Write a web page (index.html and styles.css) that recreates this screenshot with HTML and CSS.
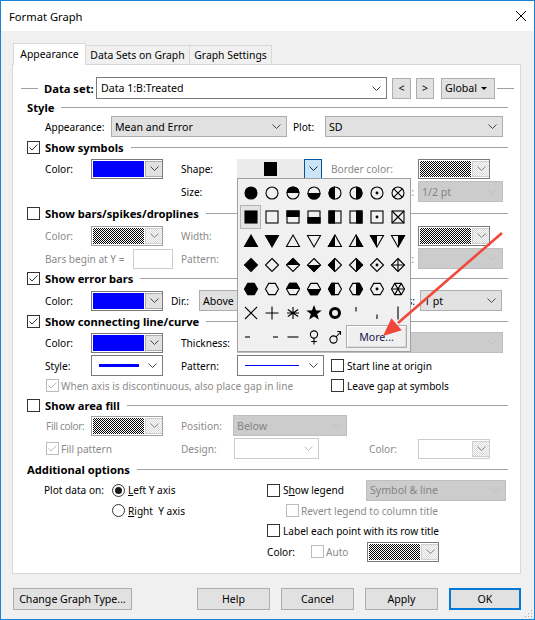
FILE: index.html
```html
<!DOCTYPE html>
<html lang="en">
<head>
    <meta charset="UTF-8">
    <title>Format Graph</title>
    <link rel="stylesheet" href="styles.css">
</head>
<body>
<div class="window">
    <!-- Title bar -->
    <div class="titlebar">
        <span class="title">Format Graph</span>
        <svg class="close" viewBox="0 0 10 10"><path d="M0 0L10 10M10 0L0 10"/></svg>
    </div>

    <div class="dialog">
        <div class="tabs">
            <div class="tab tab-app active">Appearance</div>
            <div class="tab tab-ds">Data Sets on Graph</div>
            <div class="tab tab-gs">Graph Settings</div>
        </div>

        <div class="panel">
            <!-- Data set picker -->
            <div class="dsrow">
                <span class="dsline first"></span>
                <span class="dslabel">Data set:</span>
                <div class="combo ds">Data 1:B:Treated<svg class="chev" viewBox="0 0 9 5"><path d="M.5.5l4 4 4-4"/></svg></div>
                <div class="btn prev">&lt;</div>
                <div class="btn next">&gt;</div>
                <div class="btn global">Global<span class="caret"></span></div>
                <span class="dsline last"></span>
            </div>

            <!-- Style -->
            <div class="sect mt1">Style</div>
            <div class="row mt2">
                <span class="lbl w66">Appearance:</span>
                <div class="sel w176">Mean and Error<svg class="chev" viewBox="0 0 9 5"><path d="M.5.5l4 4 4-4"/></svg></div>
                <span class="lbl plot">Plot:</span>
                <div class="sel w178">SD<svg class="chev" viewBox="0 0 9 5"><path d="M.5.5l4 4 4-4"/></svg></div>
            </div>

            <!-- Symbols -->
            <div class="sect mt3"><span class="cb"><svg viewBox="0 0 11 11"><path d="M1.5 5.5L4 8l5.5-5.5"/></svg></span>Show symbols</div>
            <div class="row mt4">
                <span class="lbl c1">Color:</span>
                <div class="swatchbox"><span class="fill blue"></span><span class="drop"><svg class="chev" viewBox="0 0 9 5"><path d="M.5.5l4 4 4-4"/></svg></span></div>
                <span class="lbl c3">Shape:</span>
                <div class="shapebox"><span class="val"><span class="blk"></span></span><span class="drop"><svg class="chev" viewBox="0 0 9 5"><path d="M.5.5l4 4 4-4"/></svg></span></div>
                <span class="lbl c5 dim">Border color:</span>
                <div class="swatchbox w85"><span class="fill pat"></span><span class="drop light"><svg class="chev" viewBox="0 0 9 5"><path d="M.5.5l4 4 4-4"/></svg></span></div>
            </div>
            <div class="row mt2">
                <span class="skip"></span>
                <span class="lbl c3">Size:</span>
                <div class="sel w85">Medium<svg class="chev" viewBox="0 0 9 5"><path d="M.5.5l4 4 4-4"/></svg></div>
                <span class="lbl c5 right dim">Border thickness:</span>
                <div class="sel off w85">1/2 pt<svg class="chev" viewBox="0 0 9 5"><path d="M.5.5l4 4 4-4"/></svg></div>
            </div>

            <!-- Bars -->
            <div class="sect mt4"><span class="cb"></span>Show bars/spikes/droplines</div>
            <div class="row mt5">
                <span class="lbl c1 dim">Color:</span>
                <div class="swatchbox off"><span class="fill pat"></span><span class="drop light"><svg class="chev" viewBox="0 0 9 5"><path d="M.5.5l4 4 4-4"/></svg></span></div>
                <span class="lbl c3 dim">Width:</span>
                <div class="sel off w85">Auto<svg class="chev" viewBox="0 0 9 5"><path d="M.5.5l4 4 4-4"/></svg></div>
                <span class="lbl c5 dim">Border color:</span>
                <div class="swatchbox w85"><span class="fill pat"></span><span class="drop light"><svg class="chev" viewBox="0 0 9 5"><path d="M.5.5l4 4 4-4"/></svg></span></div>
            </div>
            <div class="row mt2">
                <span class="lbl w88 dim">Bars begin at Y =</span>
                <span class="input"></span>
                <span class="lbl c3 short dim">Pattern:</span>
                <div class="sel off w85"><svg class="chev" viewBox="0 0 9 5"><path d="M.5.5l4 4 4-4"/></svg></div>
                <span class="lbl c5 right dim">Border:</span>
                <div class="sel off w85"><svg class="chev" viewBox="0 0 9 5"><path d="M.5.5l4 4 4-4"/></svg></div>
            </div>

            <!-- Error bars -->
            <div class="sect mt2"><span class="cb"><svg viewBox="0 0 11 11"><path d="M1.5 5.5L4 8l5.5-5.5"/></svg></span>Show error bars</div>
            <div class="row mt5">
                <span class="lbl c1">Color:</span>
                <div class="swatchbox"><span class="fill blue"></span><span class="drop"><svg class="chev" viewBox="0 0 9 5"><path d="M.5.5l4 4 4-4"/></svg></span></div>
                <span class="lbl dir">Dir.:</span>
                <div class="sel w100">Above<svg class="chev" viewBox="0 0 9 5"><path d="M.5.5l4 4 4-4"/></svg></div>
                <span class="lbl w119 right">Thickness:</span>
                <div class="sel w82">1 pt<svg class="chev" viewBox="0 0 9 5"><path d="M.5.5l4 4 4-4"/></svg></div>
            </div>

            <!-- Connecting line -->
            <div class="sect mt3"><span class="cb"><svg viewBox="0 0 11 11"><path d="M1.5 5.5L4 8l5.5-5.5"/></svg></span>Show connecting line/curve</div>
            <div class="row mt4">
                <span class="lbl c1">Color:</span>
                <div class="swatchbox"><span class="fill blue"></span><span class="drop"><svg class="chev" viewBox="0 0 9 5"><path d="M.5.5l4 4 4-4"/></svg></span></div>
                <span class="lbl c3">Thickness:</span>
                <div class="sel off w266">1 pt<svg class="chev" viewBox="0 0 9 5"><path d="M.5.5l4 4 4-4"/></svg></div>
            </div>
            <div class="row mt2">
                <span class="lbl c1">Style:</span>
                <div class="linebox w72"><span class="ln"></span><svg class="chev" viewBox="0 0 9 5"><path d="M.5.5l4 4 4-4"/></svg></div>
                <span class="lbl c3">Pattern:</span>
                <div class="linebox thin w87"><span class="ln"></span><svg class="chev" viewBox="0 0 9 5"><path d="M.5.5l4 4 4-4"/></svg></div>
                <span class="cb side"></span>
                <span class="lbl cbtext">Start line at origin</span>
            </div>
            <div class="row short mt2">
                <span class="pair w286"><span class="cb off"><svg viewBox="0 0 11 11"><path d="M1.5 5.5L4 8l5.5-5.5"/></svg></span><span class="lbl dim">When axis is discontinuous, also place gap in line</span></span>
                <span class="cb"></span>
                <span class="lbl cbtext">Leave gap at symbols</span>
            </div>

            <!-- Area fill -->
            <div class="sect mt5"><span class="cb"></span>Show area fill</div>
            <div class="row mt3">
                <span class="lbl c1 dim nudge">Fill color:</span>
                <div class="swatchbox off"><span class="fill pat"></span><span class="drop light"><svg class="chev" viewBox="0 0 9 5"><path d="M.5.5l4 4 4-4"/></svg></span></div>
                <span class="lbl c3 narrow dim">Position:</span>
                <div class="sel off w114">Below<svg class="chev" viewBox="0 0 9 5"><path d="M.5.5l4 4 4-4"/></svg></div>
            </div>
            <div class="row mt2">
                <span class="pair w136"><span class="cb off"><svg viewBox="0 0 11 11"><path d="M1.5 5.5L4 8l5.5-5.5"/></svg></span><span class="lbl dim">Fill pattern</span></span>
                <span class="lbl w53 dim">Design:</span>
                <div class="sel blank w85"><svg class="chev" viewBox="0 0 9 5"><path d="M.5.5l4 4 4-4"/></svg></div>
                <span class="lbl fillcolor dim">Color:</span>
                <div class="swatchbox blank w85"><span class="fill"></span><span class="drop light"><svg class="chev" viewBox="0 0 9 5"><path d="M.5.5l4 4 4-4"/></svg></span></div>
            </div>

            <!-- Additional options -->
            <div class="sect mt3">Additional options</div>
            <div class="opts">
                <span class="lbl plotlbl">Plot data on:</span>
                <div class="opt"><span class="rb on"></span><span class="lbl cbtext"><u>L</u>eft Y axis</span></div>
                <div class="opt">
                    <span class="cb"></span>
                    <span class="lbl cbtext legendtxt">S<u>h</u>ow legend</span>
                    <div class="sel off w140">Symbol &amp; line<svg class="chev" viewBox="0 0 9 5"><path d="M.5.5l4 4 4-4"/></svg></div>
                </div>
                <span></span>
                <div class="opt"><span class="rb"></span><span class="lbl cbtext"><u>R</u>ight&nbsp; Y axis</span></div>
                <div class="opt revert"><span class="cb off"></span><span class="lbl dim">Revert legend to column title</span></div>
                <div class="opt col3"><span class="cb"></span><span class="lbl cbtext">Label each point with its row title</span></div>
                <div class="opt col3">
                    <span class="lbl w44">Color:</span>
                    <span class="cb off"></span>
                    <span class="lbl dim auto">Auto</span>
                    <div class="swatchbox"><span class="fill pat"></span><span class="drop light"><svg class="chev" viewBox="0 0 9 5"><path d="M.5.5l4 4 4-4"/></svg></span></div>
                </div>
            </div>
        </div>

        <div class="buttons">
            <div class="btn change">Change Graph Type...</div>
            <div class="btn">Help</div>
            <div class="btn">Cancel</div>
            <div class="btn">Apply</div>
            <div class="btn ok">OK</div>
        </div>
    </div>

    <!-- Shapes used by the symbol picker -->
    <svg class="defs" aria-hidden="true">
        <defs>
            <clipPath id="ct"><rect x="-8" y="-8" width="16" height="8"/></clipPath>
            <clipPath id="cbt"><rect x="-8" y="0" width="16" height="8"/></clipPath>
            <clipPath id="cl"><rect x="-8" y="-8" width="8" height="16"/></clipPath>
            <clipPath id="cr"><rect x="0" y="-8" width="8" height="16"/></clipPath>
            <circle id="sc" r="6"/>
            <rect id="ss" x="-6" y="-6" width="12" height="12"/>
            <polygon id="stu" points="0,-6 6.5,5.5 -6.5,5.5"/>
            <polygon id="std" points="-6.5,-5.5 6.5,-5.5 0,6"/>
            <polygon id="sd" points="0,-6.5 6.5,0 0,6.5 -6.5,0"/>
            <polygon id="sh" points="-6.5,0 -3.3,-5.6 3.3,-5.6 6.5,0 3.3,5.6 -3.3,5.6"/>
        </defs>
    </svg>

    <!-- Shape dropdown (open) -->
    <div class="picker">
        <span class="cell"><svg viewBox="-7 -7 14 14"><use href="#sc" class="f"/></svg></span>
        <span class="cell"><svg viewBox="-7 -7 14 14"><use href="#sc"/></svg></span>
        <span class="cell"><svg viewBox="-7 -7 14 14"><use href="#sc"/><use href="#sc" class="f" clip-path="url(#ct)"/></svg></span>
        <span class="cell"><svg viewBox="-7 -7 14 14"><use href="#sc"/><use href="#sc" class="f" clip-path="url(#cbt)"/></svg></span>
        <span class="cell"><svg viewBox="-7 -7 14 14"><use href="#sc"/><use href="#sc" class="f" clip-path="url(#cl)"/></svg></span>
        <span class="cell"><svg viewBox="-7 -7 14 14"><use href="#sc"/><use href="#sc" class="f" clip-path="url(#cr)"/></svg></span>
        <span class="cell"><svg viewBox="-7 -7 14 14"><use href="#sc"/><circle r="0.9" class="f"/></svg></span>
        <span class="cell"><svg viewBox="-7 -7 14 14"><use href="#sc"/><path d="M-4.2-4.2L4.2 4.2M4.2-4.2L-4.2 4.2"/></svg></span>

        <span class="cell picked"><svg viewBox="-7 -7 14 14"><use href="#ss" class="f"/></svg></span>
        <span class="cell"><svg viewBox="-7 -7 14 14"><use href="#ss"/></svg></span>
        <span class="cell"><svg viewBox="-7 -7 14 14"><use href="#ss"/><use href="#ss" class="f" clip-path="url(#ct)"/></svg></span>
        <span class="cell"><svg viewBox="-7 -7 14 14"><use href="#ss"/><use href="#ss" class="f" clip-path="url(#cbt)"/></svg></span>
        <span class="cell"><svg viewBox="-7 -7 14 14"><use href="#ss"/><use href="#ss" class="f" clip-path="url(#cl)"/></svg></span>
        <span class="cell"><svg viewBox="-7 -7 14 14"><use href="#ss"/><use href="#ss" class="f" clip-path="url(#cr)"/></svg></span>
        <span class="cell"><svg viewBox="-7 -7 14 14"><use href="#ss"/><circle r="0.9" class="f"/></svg></span>
        <span class="cell"><svg viewBox="-7 -7 14 14"><use href="#ss"/><path d="M-6-6L6 6M6-6L-6 6"/></svg></span>

        <span class="cell"><svg viewBox="-7 -7 14 14"><use href="#stu" class="f"/></svg></span>
        <span class="cell"><svg viewBox="-7 -7 14 14"><use href="#std" class="f"/></svg></span>
        <span class="cell"><svg viewBox="-7 -7 14 14"><use href="#stu"/></svg></span>
        <span class="cell"><svg viewBox="-7 -7 14 14"><use href="#std"/></svg></span>
        <span class="cell"><svg viewBox="-7 -7 14 14"><use href="#stu"/><use href="#stu" class="f" clip-path="url(#cl)"/></svg></span>
        <span class="cell"><svg viewBox="-7 -7 14 14"><use href="#stu"/><use href="#stu" class="f" clip-path="url(#cr)"/></svg></span>
        <span class="cell"><svg viewBox="-7 -7 14 14"><use href="#std"/><use href="#std" class="f" clip-path="url(#cl)"/></svg></span>
        <span class="cell"><svg viewBox="-7 -7 14 14"><use href="#std"/><use href="#std" class="f" clip-path="url(#cr)"/></svg></span>

        <span class="cell"><svg viewBox="-7 -7 14 14"><use href="#sd" class="f"/></svg></span>
        <span class="cell"><svg viewBox="-7 -7 14 14"><use href="#sd"/></svg></span>
        <span class="cell"><svg viewBox="-7 -7 14 14"><use href="#sd"/><use href="#sd" class="f" clip-path="url(#ct)"/></svg></span>
        <span class="cell"><svg viewBox="-7 -7 14 14"><use href="#sd"/><use href="#sd" class="f" clip-path="url(#cbt)"/></svg></span>
        <span class="cell"><svg viewBox="-7 -7 14 14"><use href="#sd"/><use href="#sd" class="f" clip-path="url(#cl)"/></svg></span>
        <span class="cell"><svg viewBox="-7 -7 14 14"><use href="#sd"/><use href="#sd" class="f" clip-path="url(#cr)"/></svg></span>
        <span class="cell"><svg viewBox="-7 -7 14 14"><use href="#sd"/><circle r="0.9" class="f"/></svg></span>
        <span class="cell"><svg viewBox="-7 -7 14 14"><use href="#sd"/><path d="M0-6.5V6.5M-6.5 0H6.5"/></svg></span>

        <span class="cell"><svg viewBox="-7 -7 14 14"><use href="#sh" class="f"/></svg></span>
        <span class="cell"><svg viewBox="-7 -7 14 14"><use href="#sh"/></svg></span>
        <span class="cell"><svg viewBox="-7 -7 14 14"><use href="#sh"/><use href="#sh" class="f" clip-path="url(#ct)"/></svg></span>
        <span class="cell"><svg viewBox="-7 -7 14 14"><use href="#sh"/><use href="#sh" class="f" clip-path="url(#cbt)"/></svg></span>
        <span class="cell"><svg viewBox="-7 -7 14 14"><use href="#sh"/><use href="#sh" class="f" clip-path="url(#cl)"/></svg></span>
        <span class="cell"><svg viewBox="-7 -7 14 14"><use href="#sh"/><use href="#sh" class="f" clip-path="url(#cr)"/></svg></span>
        <span class="cell"><svg viewBox="-7 -7 14 14"><use href="#sh"/><circle r="0.9" class="f"/></svg></span>
        <span class="cell"><svg viewBox="-7 -7 14 14"><use href="#sh"/><path d="M-6.5 0H6.5M-3.3-5.6L3.3 5.6M3.3-5.6L-3.3 5.6"/></svg></span>

        <span class="cell"><svg viewBox="-7 -7 14 14"><path d="M-6-6L6 6M6-6L-6 6"/></svg></span>
        <span class="cell"><svg viewBox="-7 -7 14 14"><path d="M0-6.5V6.5M-6.5 0H6.5"/></svg></span>
        <span class="cell"><svg viewBox="-7 -7 14 14"><path d="M0-6V6M-5.2-3.5L5.2 3.5M5.2-3.5L-5.2 3.5M-6 0H6"/></svg></span>
        <span class="cell"><svg viewBox="-7 -7 14 14"><polygon class="f" points="0,-6.5 1.59,-2.18 6.18,-2.01 2.57,0.83 3.82,5.26 0,2.7 -3.82,5.26 -2.57,0.83 -6.18,-2.01 -1.59,-2.18"/></svg></span>
        <span class="cell"><svg viewBox="-7 -7 14 14"><circle r="4.5" class="ring"/></svg></span>
        <span class="cell"><svg viewBox="-7 -7 14 14"><path d="M0-6V-1.5"/></svg></span>
        <span class="cell"><svg viewBox="-7 -7 14 14"><path d="M0 1.5V6"/></svg></span>
        <span class="cell"><svg viewBox="-7 -7 14 14"><path d="M0-6.5V6.5"/></svg></span>

        <span class="cell"><svg viewBox="-7 -7 14 14"><path d="M-6 0H-1"/></svg></span>
        <span class="cell"><svg viewBox="-7 -7 14 14"><path d="M1 0H6"/></svg></span>
        <span class="cell"><svg viewBox="-7 -7 14 14"><path d="M-5.5 0H5.5"/></svg></span>
        <span class="cell"><svg viewBox="-7 -7 14 14"><circle cy="-2.5" r="3.6"/><path d="M0 1.1V7.5M-2.8 4.5H2.8"/></svg></span>
        <span class="cell"><svg viewBox="-7 -7 14 14"><circle cx="-1.5" cy="2.5" r="3.6"/><path d="M1 0L5.5-5M2.2-5.5H5.5V-2.2"/></svg></span>
        <div class="more">More...</div>
    </div>

    <!-- Callout arrow -->
    <svg class="arrow" width="535" height="620">
        <line x1="502" y1="233" x2="398" y2="323"/>
        <polygon points="383,336 401.8,330.2 391.4,318.2"/>
    </svg>

    <svg class="grip" viewBox="0 0 10 10"><path d="M8 2h1v1H8zM5 5h1v1H5zM8 5h1v1H8zM2 8h1v1H2zM5 8h1v1H5zM8 8h1v1H8z"/></svg>
</div>
</body>
</html>
```

FILE: styles.css
```css
* {
    box-sizing: border-box;
    margin: 0;
    padding: 0;
}
body {
    font-family: "Noto Sans", "Open Sans", sans-serif;
    font-size: 10.1px;
    color: #000;
    background: #fff;
}
.window {
    position: relative;
    width: 535px;
    height: 620px;
    border: 1px solid #1883d7;
    background: #f0f0f0;
    overflow: hidden;
}

/* Title bar */
.titlebar {
    height: 30px;
    background: #fff;
    display: flex;
    align-items: center;
    justify-content: space-between;
    padding: 0 8px 0 8px;
}
.title {
    font-size: 11.2px;
}
.close {
    width: 10px;
    height: 10px;
    stroke: #000;
    stroke-width: 1;
}

.dialog {
    padding: 12px 13px 0 11px;
}

/* Tabs */
.tabs {
    display: flex;
    align-items: flex-end;
    height: 21px;
    padding-left: 1px;
}
.tab {
    height: 19px;
    border: 1px solid #d9d9d9;
    border-bottom: none;
    background: #f0f0f0;
    display: flex;
    align-items: center;
    justify-content: center;
    white-space: nowrap;
    font-size: 10.4px;
}
.tab + .tab {
    margin-left: -1px;
}
.tab.active {
    height: 22px;
    margin-bottom: -1px;
    padding-bottom: 2px;
    background: #fff;
    position: relative;
    z-index: 1;
}
.tab-app { width: 73px; }
.tab-ds { width: 105px; }
.tab-gs { width: 83px; }

.panel {
    height: 510px;
    border: 1px solid #d9d9d9;
    background: #fff;
    padding: 0 12px 0 14px;
}

/* Data set row */
.dsrow {
    display: flex;
    align-items: center;
    height: 22px;
    margin-top: 12px;
}
.dsrow > * {
    flex-shrink: 0;
}
.dsline {
    width: 17px;
    height: 1px;
    background: #a0a0a0;
}
.dsline.first { margin-left: -6px; }
.dsline.last { margin-left: 2px; }
.dslabel {
    font-weight: bold;
    font-size: 11.2px;
    margin-left: 6px;
    width: 52px;
    white-space: nowrap;
}
.combo {
    display: flex;
    align-items: center;
    height: 22px;
    border: 1px solid #7a7a7a;
    background: #fff;
    padding-left: 4px;
    font-size: 10.6px;
}
.combo.ds { width: 291px; }
.dsrow .btn { height: 21px; }
.btn.prev { width: 19px; margin-left: 5px; }
.btn.next { width: 18px; margin-left: 5px; }
.btn.global {
    width: 54px;
    margin-left: 7px;
    justify-content: flex-start;
    padding-left: 3px;
}
.caret {
    margin: 1px 7px 0 auto;
    border: 3px solid transparent;
    border-top: 3px solid #000;
    border-bottom: none;
}

/* Section headings */
.sect {
    display: flex;
    align-items: center;
    height: 14px;
    font-weight: bold;
    font-size: 11.2px;
    white-space: nowrap;
}
.sect::after {
    content: "";
    flex: 1;
    height: 1px;
    background: #a0a0a0;
    margin-left: 7px;
}
.sect .cb { margin-right: 5px; }

.mt1 { margin-top: 1px; }
.mt2 { margin-top: 2px; }
.mt3 { margin-top: 3px; }
.mt4 { margin-top: 4px; }
.mt5 { margin-top: 5px; }

/* Control rows */
.row {
    display: flex;
    align-items: center;
    height: 21px;
    padding-left: 18px;
}
.row.short { height: 15px; }
.row > * {
    flex-shrink: 0;
}
.lbl { white-space: nowrap; }
.dim { color: #8a8a8a; }
.right {
    text-align: right;
    padding-right: 4px;
}
.c1 { width: 46px; }
.c3 { width: 56px; margin-left: 18px; }
.c3.short { margin-left: 8px; }
.c3.narrow { width: 52px; }
.c5 { width: 87px; margin-left: 9px; }
.c5.right { width: 96px; margin-left: 0; }
.nudge {
    padding-left: 1px;
    letter-spacing: -0.35px;
}
.skip { width: 118px; }
.plot { width: 32px; margin-left: 6px; }
.dir { width: 28px; margin-left: 8px; }
.w44 { width: 44px; }
.w53 { width: 53px; }
.w66 { width: 66px; }
.w72 { width: 72px; }
.w82 { width: 82px; margin-left: 2px; }
.w85 { width: 85px; }
.w87 { width: 87px; }
.w88 { width: 88px; }
.w100 { width: 100px; }
.w114 { width: 114px; }
.w119 { width: 119px; padding-right: 3px; }
.w136 { width: 136px; }
.w140 { width: 140px; }
.w176 { width: 176px; }
.w178 { width: 178px; }
.w266 { width: 266px; }
.w286 { width: 286px; }
.fillcolor { width: 49px; margin-left: 50px; }

/* Drop-down lists */
.sel {
    display: flex;
    align-items: center;
    height: 21px;
    border: 1px solid #adadad;
    background: #e1e1e1;
    padding-left: 3px;
    white-space: nowrap;
    font-size: 10.6px;
}
.sel.off {
    background: #cccccc;
    border-color: #bfbfbf;
    color: #838383;
}
.sel.blank {
    background: #fff;
    border-color: #cccccc;
}
.chev {
    width: 9px;
    height: 5px;
    margin-left: auto;
    margin-right: 5px;
    fill: none;
    stroke: #444;
    stroke-width: 1;
    flex-shrink: 0;
}
.sel.off .chev,
.sel.blank .chev {
    stroke: #bfbfbf;
}

/* Colour / pattern pickers */
.swatchbox {
    display: flex;
    width: 72px;
    height: 20px;
    border: 1px solid #7a7a7a;
    background: #fff;
    padding: 1px 0 1px 1px;
}
.swatchbox.off { border-color: #a0a0a0; }
.swatchbox.blank { border-color: #cccccc; }
.swatchbox .fill { flex: 1; }
.fill.blue { background: #0000ff; }
.fill.pat {
    background-image: repeating-conic-gradient(#000 0 25%, #fff 0 50%);
    background-size: 2px 2px;
}
.drop {
    width: 17px;
    margin-left: 1px;
    background: #e1e1e1;
    border: 1px solid #adadad;
    border-right: none;
    display: flex;
    align-items: center;
    justify-content: center;
}
.drop .chev { margin: 0; }
.drop.light {
    background-image: repeating-conic-gradient(#d6d6d6 0 25%, #fff 0 50%);
    background-size: 2px 2px;
    border-color: #d0d0d0;
}
.drop.light .chev { stroke: #9a9a9a; }

.shapebox {
    display: flex;
    width: 85px;
    height: 20px;
}
.shapebox .val {
    flex: 1;
    background: #ebebeb;
    display: flex;
    align-items: center;
    justify-content: center;
}
.blk {
    width: 13px;
    height: 14px;
    background: #000;
}
.shapebox .drop {
    width: 18px;
    margin: 0;
    background: #cce4f7;
    border: 1px solid #005499;
}
.shapebox .drop .chev { stroke: #222; }

.linebox {
    display: flex;
    align-items: center;
    height: 21px;
    border: 1px solid #7a7a7a;
    background: #fff;
}
.linebox .ln {
    width: 40px;
    height: 3px;
    margin-left: 7px;
    background: #0000ff;
}
.linebox.thin .ln {
    width: 54px;
    height: 1px;
}

.input {
    width: 40px;
    height: 20px;
    border: 1px solid #cccccc;
    background: #fff;
}

/* Check boxes and radio buttons */
.cb {
    width: 13px;
    height: 13px;
    border: 1px solid #333;
    background: #fff;
    display: flex;
    align-items: center;
    justify-content: center;
    flex-shrink: 0;
}
.cb svg {
    width: 11px;
    height: 11px;
    fill: none;
    stroke: #333;
    stroke-width: 1;
}
.cb.off { border-color: #bcbcbc; }
.cb.off svg { stroke: #bcbcbc; }
.cb.side { margin-left: 7px; }
.cbtext { margin-left: 3px; }
.pair {
    display: flex;
    align-items: center;
}
.pair .cb { margin-left: 1px; }
.pair .lbl { margin-left: 2px; }

.rb {
    width: 13px;
    height: 13px;
    border: 1px solid #333;
    border-radius: 50%;
    background: #fff;
    display: flex;
    align-items: center;
    justify-content: center;
    flex-shrink: 0;
}
.rb.on::after {
    content: "";
    width: 7px;
    height: 7px;
    border-radius: 50%;
    background: #1a1a1a;
}

/* Additional options */
.opts {
    display: grid;
    grid-template-columns: 85px 155px 1fr;
    grid-template-rows: 22px 19px 21px 21px;
    margin-top: 3px;
}
.opt {
    display: flex;
    align-items: center;
}
.opt.col3 { grid-column: 3; }
.opt.revert { padding-left: 19px; }
.opt.revert .lbl { margin-left: 2px; }
.plotlbl {
    padding-left: 17px;
    align-self: center;
}
.legendtxt { width: 83px; }
.auto { width: 41px; margin-left: 2px; }

/* Dialog buttons */
.buttons {
    display: flex;
    margin-top: 14px;
}
.btn {
    height: 22px;
    border: 1px solid #adadad;
    background: #e1e1e1;
    display: flex;
    align-items: center;
    justify-content: center;
    white-space: nowrap;
    font-size: 10.6px;
}
.buttons .btn {
    width: 73px;
    margin-left: 11px;
}
.buttons .btn.change {
    width: 119px;
    margin-left: 1px;
    margin-right: auto;
}
.buttons .btn.ok {
    width: 72px;
    border: 2px solid #0078d7;
}

/* Symbol picker */
.defs {
    position: absolute;
    width: 0;
    height: 0;
}
.picker {
    position: absolute;
    left: 236px;
    top: 177px;
    width: 174px;
    height: 174px;
    border: 1px solid #a0a0a0;
    background: #f0f0f0;
    padding: 2px;
    display: grid;
    grid-template-columns: repeat(8, 21px);
    grid-template-rows: repeat(7, 24px);
}
.cell {
    display: flex;
    align-items: center;
    justify-content: center;
}
.cell.picked {
    border: 1px solid #b4b4b4;
    background: #e3e3e3;
}
.cell svg {
    width: 14px;
    height: 14px;
    overflow: visible;
    fill: none;
    stroke: #000;
    stroke-width: 1.1;
}
.cell .f { fill: #000; }
.cell .ring { stroke-width: 3; }
.more {
    grid-column: span 3;
    margin: 0 1px 1px 1px;
    border: 1px solid #adadad;
    background: #f0f0f0;
    box-shadow: inset 1px 1px #fff, inset -1px -1px #dcdcdc;
    color: #15154a;
    display: flex;
    align-items: center;
    justify-content: center;
    font-size: 10.6px;
}

.arrow {
    position: absolute;
    left: -1px;
    top: -1px;
    pointer-events: none;
}
.arrow line {
    stroke: #f0473b;
    stroke-width: 2.6;
}
.arrow polygon { fill: #f0473b; }

.grip {
    position: absolute;
    right: 1px;
    bottom: 1px;
    width: 10px;
    height: 10px;
    fill: #a8a8a8;
}
```
